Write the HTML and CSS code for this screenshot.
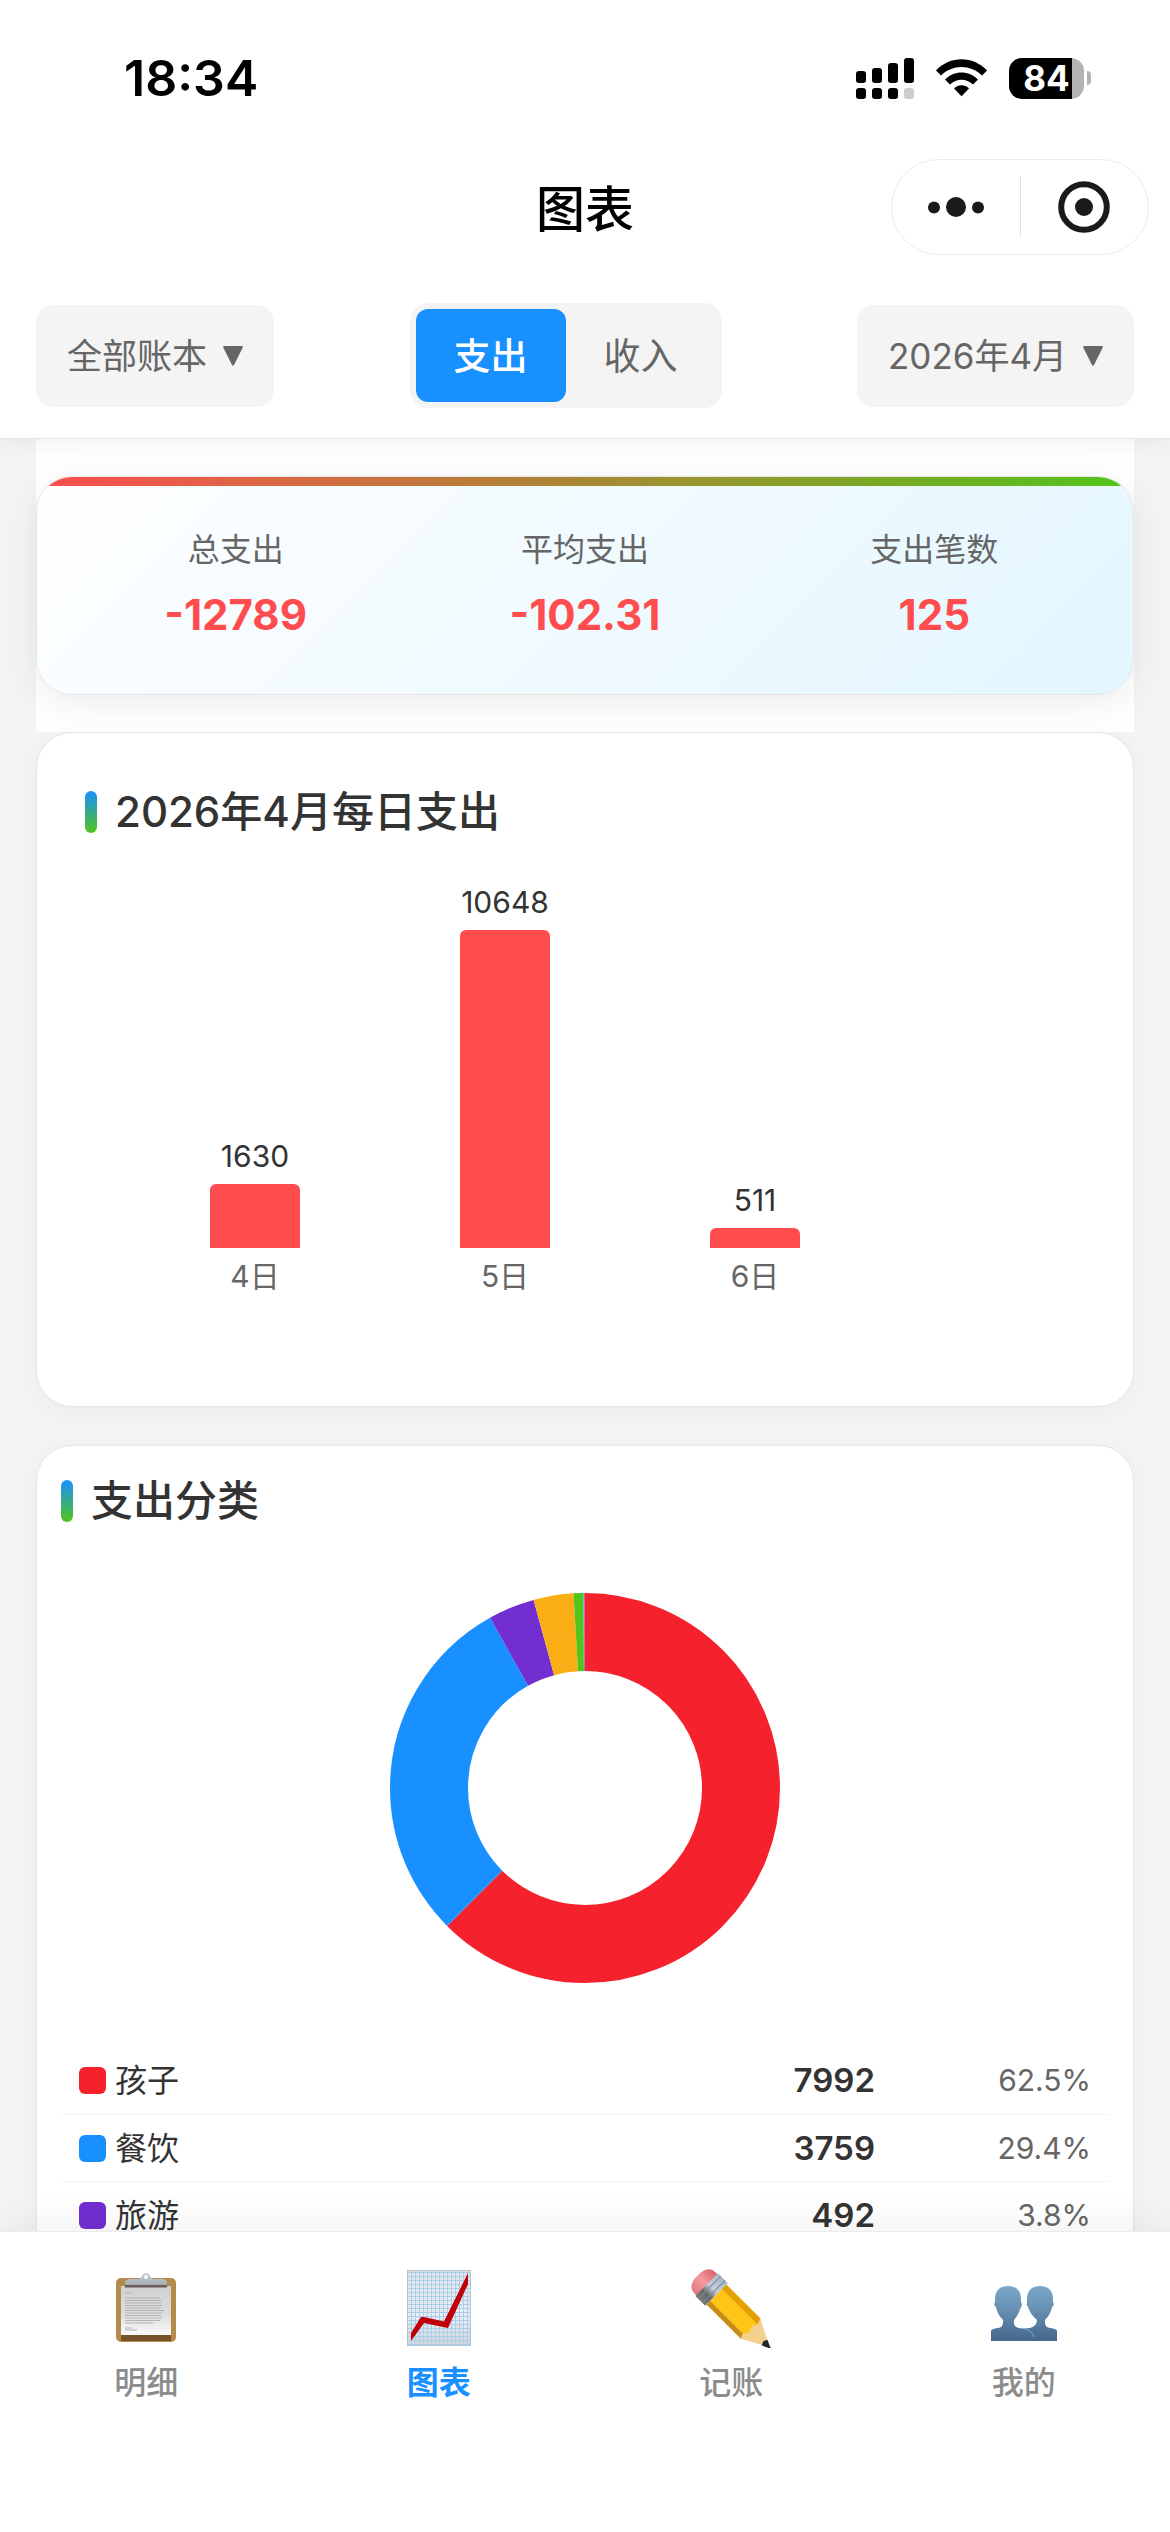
FILE: index.html
```html
<!DOCTYPE html>
<html lang="zh-CN">
<head>
    <meta charset="UTF-8">
    <meta name="viewport" content="width=device-width, initial-scale=1.0">
    <title>图表</title>
    <link rel="stylesheet" href="styles.css">
</head>
<body>
    <div class="app">
        <header class="header">
            <div class="status">
                <span class="time">18:34</span>
                <div class="status-icons">
                    <svg width="58" height="41" viewBox="0 0 58 41">
                        <rect x="0" y="13" width="10" height="12" rx="3"/>
                        <rect x="16" y="10" width="10" height="15" rx="3"/>
                        <rect x="32" y="5" width="10" height="20" rx="3"/>
                        <rect x="48" y="0" width="10" height="25" rx="3"/>
                        <rect x="0" y="30" width="10" height="11" rx="3"/>
                        <rect x="16" y="30" width="10" height="11" rx="3"/>
                        <rect x="32" y="30" width="10" height="11" rx="3"/>
                        <rect x="48" y="30" width="10" height="11" rx="3" fill="#ccc"/>
                    </svg>
                    <svg width="51" height="38" viewBox="0 0 51 38">
                        <path d="M0 11.5 C14 -3.5 37 -3.5 51 11.5 L46 16.5 C34.5 5 16.5 5 5 16.5 Z"/>
                        <path d="M9 20.5 C18 11 33 11 42 20.5 L37 25.5 C30.5 19 20.5 19 14 25.5 Z"/>
                        <path d="M18 29.5 C22 25.2 29 25.2 33 29.5 L25.5 37.2 Z"/>
                    </svg>
                    <div class="battery">
                        <div class="battery-body">84</div>
                        <div class="battery-tip"></div>
                    </div>
                </div>
            </div>
            <div class="nav">
                <h1 class="nav-title">图表</h1>
                <div class="capsule">
                    <button class="capsule-btn" aria-label="更多">
                        <svg width="56" height="20" viewBox="0 0 56 20">
                            <circle cx="6" cy="10.5" r="6"/>
                            <circle cx="28" cy="10" r="10"/>
                            <circle cx="50" cy="10.5" r="6"/>
                        </svg>
                    </button>
                    <button class="capsule-btn" aria-label="关闭">
                        <svg width="52" height="52" viewBox="0 0 52 52">
                            <circle cx="26" cy="26" r="22.8" fill="none" stroke="#1a1a1a" stroke-width="6"/>
                            <circle cx="26" cy="26" r="9"/>
                        </svg>
                    </button>
                </div>
            </div>
            <div class="filters">
                <label class="picker">
                    <select aria-label="账本">
                        <option>全部账本</option>
                    </select>
                    <svg class="arrow" viewBox="0 0 20 20"><path d="M1.5 0 H18.5 Q20.5 0 19.5 2 L11 19 Q10 20.5 9 19 L0.5 2 Q-0.5 0 1.5 0 Z"/></svg>
                </label>
                <div class="segment">
                    <button class="segment-btn active">支出</button>
                    <button class="segment-btn">收入</button>
                </div>
                <label class="picker">
                    <select aria-label="月份">
                        <option>2026年4月</option>
                    </select>
                    <svg class="arrow" viewBox="0 0 20 20"><path d="M1.5 0 H18.5 Q20.5 0 19.5 2 L11 19 Q10 20.5 9 19 L0.5 2 Q-0.5 0 1.5 0 Z"/></svg>
                </label>
            </div>
        </header>

        <main class="content">
            <div class="summary-wrap">
                <section class="summary">
                    <div class="summary-item">
                        <span class="summary-label">总支出</span>
                        <span class="summary-value">-12789</span>
                    </div>
                    <div class="summary-item">
                        <span class="summary-label">平均支出</span>
                        <span class="summary-value">-102.31</span>
                    </div>
                    <div class="summary-item">
                        <span class="summary-label">支出笔数</span>
                        <span class="summary-value">125</span>
                    </div>
                </section>
            </div>

            <section class="card daily">
                <h2 class="card-title">2026年4月每日支出</h2>
                <div class="bars">
                    <div class="bar-col">
                        <span class="bar-value">1630</span>
                        <div class="bar" style="height: 64px"></div>
                        <span class="bar-day">4日</span>
                    </div>
                    <div class="bar-col">
                        <span class="bar-value">10648</span>
                        <div class="bar" style="height: 318px"></div>
                        <span class="bar-day">5日</span>
                    </div>
                    <div class="bar-col">
                        <span class="bar-value">511</span>
                        <div class="bar" style="height: 20px"></div>
                        <span class="bar-day">6日</span>
                    </div>
                </div>
            </section>

            <section class="card category">
                <h2 class="card-title">支出分类</h2>
                <!-- each ring slice is a dash, pathLength makes the units percent -->
                <svg class="donut" viewBox="0 0 390 390">
                    <g fill="none" stroke-width="78" transform="rotate(-90 195 195)">
                        <circle cx="195" cy="195" r="156" pathLength="100" stroke="#f5222d" stroke-dasharray="62.5 37.5"/>
                        <circle cx="195" cy="195" r="156" pathLength="100" stroke="#1890ff" stroke-dasharray="29.4 70.6" stroke-dashoffset="-62.5"/>
                        <circle cx="195" cy="195" r="156" pathLength="100" stroke="#722ed1" stroke-dasharray="3.85 96.15" stroke-dashoffset="-91.9"/>
                        <circle cx="195" cy="195" r="156" pathLength="100" stroke="#faad14" stroke-dasharray="3.3 96.7" stroke-dashoffset="-95.75"/>
                        <circle cx="195" cy="195" r="156" pathLength="100" stroke="#52c41a" stroke-dasharray="0.8 99.2" stroke-dashoffset="-99.05"/>
                        <circle cx="195" cy="195" r="156" pathLength="100" stroke="#13c2c2" stroke-dasharray="0.07 99.93" stroke-dashoffset="-99.85"/>
                        <circle cx="195" cy="195" r="156" pathLength="100" stroke="#eb2f96" stroke-dasharray="0.08 99.92" stroke-dashoffset="-99.92"/>
                    </g>
                </svg>
                <table class="legend">
                    <tr>
                        <td class="name"><span class="swatch red"></span>孩子</td>
                        <td class="amount">7992</td>
                        <td class="percent">62.5%</td>
                    </tr>
                    <tr>
                        <td class="name"><span class="swatch blue"></span>餐饮</td>
                        <td class="amount">3759</td>
                        <td class="percent">29.4%</td>
                    </tr>
                    <tr>
                        <td class="name"><span class="swatch purple"></span>旅游</td>
                        <td class="amount">492</td>
                        <td class="percent">3.8%</td>
                    </tr>
                </table>
            </section>
        </main>

        <nav class="tabbar">
            <a class="tab" href="#">
                <svg class="tab-icon" viewBox="0 0 80 80">
                    <defs>
                        <linearGradient id="paper" x1="0" y1="0" x2="0" y2="1">
                            <stop offset="0" stop-color="#cfcfd1"/>
                            <stop offset="0.6" stop-color="#dedee0"/>
                            <stop offset="1" stop-color="#fafafa"/>
                        </linearGradient>
                        <linearGradient id="clip" x1="0" y1="0" x2="0" y2="1">
                            <stop offset="0" stop-color="#c9d0d6"/>
                            <stop offset="1" stop-color="#a2a9b1"/>
                        </linearGradient>
                    </defs>
                    <rect x="10" y="10" width="60" height="64" rx="5" fill="#b68a4b"/>
                    <rect x="15" y="66" width="50" height="7" fill="#76522a"/>
                    <rect x="15" y="18" width="50" height="49" fill="url(#paper)"/>
                    <path d="M19 18 V15 Q19 11 24 11 H33 Q35 10 36 8 Q37 5 40 5 Q43 5 44 8 Q45 10 47 11 H56 Q61 11 61 15 V18 Z" fill="url(#clip)"/>
                    <circle cx="40" cy="9" r="2" fill="#fff"/>
                    <rect x="19" y="17" width="42" height="2.5" fill="#6b5b55"/>
                    <path d="M19 25 H27 M19 30 H54 M19 32.5 H56 M19 35 H55 M19 37.5 H56 M19 40 H55 M19 42.5 H58 M19 45 H56 M19 47.5 H55 M19 50 H56 M19 52.5 H54 M19 55 H47 M19 60 H26 M19 62 H31" fill="none" stroke="#b4b4b4" stroke-width="1"/>
                </svg>
                <span>明细</span>
            </a>
            <a class="tab active" href="#">
                <svg class="tab-icon" viewBox="0 0 80 80">
                    <defs>
                        <linearGradient id="sheet" x1="0" y1="0" x2="0" y2="1">
                            <stop offset="0" stop-color="#e2e6ea"/>
                            <stop offset="0.6" stop-color="#e9edf1"/>
                            <stop offset="1" stop-color="#d3d6d9"/>
                        </linearGradient>
                        <pattern id="grid" width="4" height="4" patternUnits="userSpaceOnUse">
                            <path d="M0 .5 H4 M.5 0 V4" stroke="#a9cfec" stroke-width="1"/>
                        </pattern>
                    </defs>
                    <rect x="8" y="2" width="64" height="76" fill="url(#sheet)"/>
                    <rect x="8" y="2" width="64" height="76" fill="url(#grid)"/>
                    <rect x="8.5" y="2.5" width="63" height="75" fill="none" stroke="#b9c3cc"/>
                    <path d="M12 65 L22 49 L25 49 L45 53.5 L69 5 V16 L49 60 L25 55 L12 73 Z" fill="#c00006"/>
                </svg>
                <span>图表</span>
            </a>
            <a class="tab" href="#">
                <svg class="tab-icon" viewBox="0 0 80 80">
                    <defs>
                        <linearGradient id="ferrule" x1="0" y1="0" x2="0" y2="1">
                            <stop offset="0" stop-color="#a5b8cc"/>
                            <stop offset="0.45" stop-color="#c3d0dc"/>
                            <stop offset="0.7" stop-color="#66696c"/>
                            <stop offset="1" stop-color="#77797b"/>
                        </linearGradient>
                        <linearGradient id="rubber" x1="0" y1="0" x2="0" y2="1">
                            <stop offset="0" stop-color="#d95f6b"/>
                            <stop offset="0.5" stop-color="#f79a9f"/>
                            <stop offset="1" stop-color="#e0757f"/>
                        </linearGradient>
                    </defs>
                    <!-- pencil lies along the x axis, then turned -->
                    <g transform="translate(10 11) rotate(45)">
                        <path d="M6 -15 Q-5 -15 -5 0 Q-5 15 6 15 H11 V-15 Z" fill="url(#rubber)"/>
                        <path d="M8 -16 H22 V16 H8 Z" fill="url(#ferrule)"/>
                        <path d="M12 -16 V16 M18 -16 V16" stroke="#7d8790" stroke-width="1"/>
                        <path d="M22 -14 H70 L75 -6 L75 9 L70 14 H22 Z" fill="#fec416"/>
                        <path d="M22 -14 H70 L73 -8 H22 Z" fill="#e2a005"/>
                        <path d="M22 9 H74 L70 14 H22 Z" fill="#c68d1c"/>
                        <path d="M70 -14 L97 0 L70 14 L68 9 L72 4 L69 -3 L72 -8 Z" fill="#f3d08d"/>
                        <path d="M90 -4 L99 0 L90 4 L88 0 Z" fill="#222a2f"/>
                    </g>
                </svg>
                <span>记账</span>
            </a>
            <a class="tab" href="#">
                <svg class="tab-icon" viewBox="0 0 80 80">
                    <defs>
                        <linearGradient id="people" gradientUnits="userSpaceOnUse" x1="0" y1="18" x2="0" y2="73">
                            <stop offset="0" stop-color="#7ba7c9"/>
                            <stop offset="0.4" stop-color="#6a91b5"/>
                            <stop offset="1" stop-color="#44678b"/>
                        </linearGradient>
                    </defs>
                    <path d="M38 73 V62 Q40 60 46 60 Q53 58 53 52 Q46 46 44 39 Q42 37 43 34 Q42 18 56 18 Q70 18 69 34 Q71 37 68 39 Q67 46 61 52 Q60 59 66 60 Q73 61 73 63 V73 Z" fill="url(#people)"/>
                    <path d="M7 73 V63 Q7 61 14 60 Q20 59 19 52 Q13 46 12 39 Q9 37 11 34 Q10 18 24 18 Q38 18 37 34 Q39 37 37 39 Q35 46 30 52 Q29 59 35 60 Q48 61 51 73 Z" fill="url(#people)"/>
                    <path d="M38 60 Q48 62 50 69" fill="none" stroke="#7db4d0" stroke-width="1"/>
                </svg>
                <span>我的</span>
            </a>
        </nav>
    </div>
</body>
</html>
```

FILE: styles.css
```css
* { box-sizing: border-box; margin: 0; padding: 0; }
body { font-family: Inter, "Noto Sans CJK SC", sans-serif; background-color: #f4f4f4; color: #333; }
button, select { font-family: inherit; border: none; background: none; cursor: pointer; }
.app { display: flex; flex-direction: column; height: 100vh; }

.header { position: relative; z-index: 1; background: #fff; border-bottom: 1px solid #e6e6e6; box-shadow: 0 4px 24px rgba(0, 0, 0, 0.06); }
.status { display: flex; justify-content: space-between; align-items: center; height: 138px; padding: 18px 79px 0 124px; color: #000; }
.time { font-size: 50px; font-weight: 600; }
.status-icons { display: flex; align-items: center; gap: 22px; }
.battery { display: flex; align-items: center; gap: 3px; }
.battery-body { width: 75px; height: 41px; border-radius: 13px; background: linear-gradient(90deg, #000 84%, #b3b3b3 84%); color: #fff; font-size: 35px; font-weight: 700; line-height: 41px; text-align: center; }
.battery-tip { width: 4px; height: 14px; border-radius: 0 4px 4px 0; background: #b3b3b3; }

.nav { display: grid; grid-template-columns: 1fr auto 1fr; align-items: center; height: 138px; padding: 0 21px; }
.nav-title { grid-column: 2; padding-bottom: 4px; font-size: 49px; font-weight: 500; color: #000; }
.capsule { display: flex; justify-self: end; align-items: center; width: 258px; height: 96px; border: 1px solid #ebebeb; border-radius: 48px; }
.capsule-btn { display: flex; flex: 1; justify-content: center; align-items: center; height: 60px; }
.capsule-btn + .capsule-btn { border-left: 1px solid #e0e0e0; }
.capsule svg { fill: #1a1a1a; }

.filters { display: flex; justify-content: space-between; align-items: center; padding: 27px 36px 30px; }
.picker { display: flex; align-items: center; gap: 15px; height: 102px; padding: 0 31px; border-radius: 18px; background: #f4f4f4; cursor: pointer; }
.picker select { appearance: none; font-size: 35px; color: #666; }
.arrow { width: 20px; height: 20px; fill: #666; }
.segment { display: flex; padding: 6px; border-radius: 18px; background: #f4f4f4; }
.segment-btn { width: 150px; height: 93px; padding-bottom: 4px; border-radius: 12px; font-size: 37px; color: #666; }
.segment-btn.active { background: #1890ff; color: #fff; font-weight: 500; }

.content { flex: 1; overflow: hidden; padding: 0 36px; }
.summary-wrap { padding: 37px 0; background: #fff; }
.summary { position: relative; display: flex; padding: 49px 24px 48px; border: 1px solid #e6e6e6; border-radius: 36px; background: linear-gradient(135deg, #fff, #f0faff 50%, #e3f6ff); box-shadow: 0 8px 36px rgba(0, 0, 0, 0.08); overflow: hidden; }
.summary::before { content: ""; position: absolute; top: 0; left: 0; right: 0; height: 9px; background: linear-gradient(90deg, #ff4d4f, #52c41a); }
.summary-item { display: flex; flex: 1; flex-direction: column; align-items: center; gap: 9px; }
.summary-label { font-size: 32px; line-height: 48px; color: #666; }
.summary-value { font-size: 42px; line-height: 63px; font-weight: 700; color: #ff4d4f; }

.card { margin-bottom: 38px; border: 1px solid #e6e6e6; border-radius: 36px; background: #fff; box-shadow: 0 4px 24px rgba(0, 0, 0, 0.04); }
.card-title { display: flex; align-items: center; gap: 18px; font-size: 42px; line-height: 62px; font-weight: 500; }
.card-title::before { content: ""; width: 12px; height: 42px; border-radius: 6px; background: linear-gradient(#1890ff, #52c41a); }
.daily { padding: 48px; }
.bars { display: flex; gap: 160px; height: 515px; padding: 0 0 64px 125px; }
.bar-col { display: flex; flex-direction: column; justify-content: flex-end; align-items: center; gap: 10px; width: 90px; }
.bar { width: 90px; border-radius: 6px 6px 0 0; background: #ff4d4f; }
.bar-value, .bar-day { font-size: 30px; line-height: 36px; }
.bar-day { color: #666; }

.category { padding: 24px; }
.donut { display: block; width: 390px; height: 390px; margin: 61px auto 64px; }
.legend { width: 100%; border-collapse: collapse; }
.legend td { height: 67px; border-bottom: 1px solid #f4f4f4; }
.legend .name { padding: 0 0 4px 18px; font-size: 32px; }
.swatch { display: inline-block; width: 27px; height: 27px; margin-right: 9px; border-radius: 6px; vertical-align: -2px; }
.swatch.red { background: #f5222d; }
.swatch.blue { background: #1890ff; }
.swatch.purple { background: #722ed1; }
.amount { font-size: 33px; font-weight: 600; text-align: right; }
.percent { width: 234px; padding-right: 18px; font-size: 30px; color: #666; text-align: right; }

.tabbar { position: relative; z-index: 1; display: flex; height: 301px; padding-top: 36px; border-top: 1px solid #ebebeb; background: #fff; box-shadow: 0 -6px 36px rgba(0, 0, 0, 0.06); }
.tab { display: flex; flex: 1; flex-direction: column; align-items: center; gap: 15px; font-size: 32px; line-height: 40px; font-weight: 500; color: #8c8c8c; text-decoration: none; }
.tab.active { color: #1890ff; font-weight: 700; }
.tab-icon { width: 80px; height: 80px; }
```
